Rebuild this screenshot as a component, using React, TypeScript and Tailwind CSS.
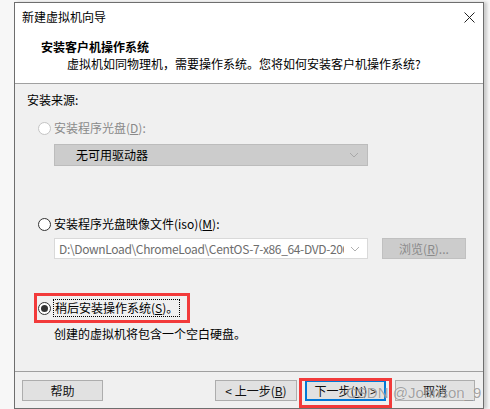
import React from 'react';

const font = "font-['Microsoft_YaHei','Noto_Sans_CJK_SC',sans-serif]";

function Radio({ checked, disabled }: { checked?: boolean; disabled?: boolean }) {
  return (
    <span
      className={`flex h-[13px] w-[13px] shrink-0 items-center justify-center rounded-full border bg-white ${
        disabled ? 'border-[#c4c4c4]' : 'border-[#333333]'
      }`}
    >
      {checked && <span className="h-[7px] w-[7px] rounded-full bg-[#333333]" />}
    </span>
  );
}

function Chevron({ color }: { color: string }) {
  return (
    <svg width="10" height="6" viewBox="0 0 10 6" fill="none">
      <path d="M1 1l4 4 4-4" stroke={color} strokeWidth="1" />
    </svg>
  );
}

function Btn({ children, w, focused }: { children: React.ReactNode; w: string; focused?: boolean }) {
  return (
    <div
      className={`flex h-[21px] items-center justify-center bg-[#e1e1e1] text-[12px] leading-[16px] text-[#111] ${w} ${
        focused ? 'border-2 border-[#0078d7]' : 'border border-[#adadad]'
      }`}
    >
      {children}
    </div>
  );
}

export default function App() {
  return (
    <div className={`relative h-[409px] w-[490px] overflow-hidden bg-[#f7f7f7] ${font}`}>
      {/* the wizard window */}
      <div className="ml-[14px] mt-[2px] flex h-[407px] w-[470px] flex-col border border-[#6e6e6e] bg-[#f0f0f0] shadow-[3px_0_3px_rgba(0,0,0,0.18)]">
        {/* header */}
        <div className="flex h-[81px] flex-col border-b border-[#a0a0a0] bg-white">
          <div className="flex items-center justify-between pl-[7px] pr-[8px] pt-[6px]">
            <span className="text-[12px] leading-[16px] text-black">新建虚拟机向导</span>
            <svg width="11" height="11" viewBox="0 0 11 11">
              <path d="M0.5 0.5l10 10M10.5 0.5l-10 10" stroke="#222" strokeWidth="1" />
            </svg>
          </div>
          <div className="mt-[14px] pl-[26px] text-[12px] font-bold leading-[16px] text-black">安装客户机操作系统</div>
          <div className="mt-[1px] pl-[52px] text-[12px] leading-[16px] text-black">
            虚拟机如同物理机，需要操作系统。您将如何安装客户机操作系统?
          </div>
        </div>

        {/* body */}
        <div className="flex flex-1 flex-col text-[12px] leading-[16px]">
          <div className="ml-[12px] mt-[8px] text-black">安装来源:</div>

          <div className="ml-[23px] mt-[12px] flex items-center gap-[3px] text-[#8a8a8a]">
            <Radio disabled />
            <span>
              安装程序光盘(<span className="underline">D</span>):
            </span>
          </div>
          <div className="ml-[39px] mt-[8px] flex h-[22px] w-[314px] items-center justify-between border border-[#bcbcbc] bg-[#cccccc] pl-[21px] pr-[8px]">
            <span className="text-black">无可用驱动器</span>
            <Chevron color="#a8a8a8" />
          </div>

          <div className="ml-[23px] mt-[50px] flex items-center gap-[3px] text-black">
            <Radio />
            <span>
              安装程序光盘映像文件(iso)(<span className="underline">M</span>):
            </span>
          </div>
          <div className="ml-[39px] mt-[6px] flex items-center gap-[14px]">
            <div className="flex h-[21px] w-[314px] items-center border border-[#d9d9d9] bg-white pl-[4px] pr-[7px]">
              <span className="flex-1 overflow-hidden whitespace-nowrap tracking-[-0.35px] text-[#6d6d6d]">
                D:\DownLoad\ChromeLoad\CentOS-7-x86_64-DVD-2009.iso
              </span>
              <span className="ml-[6px]">
                <Chevron color="#b0b0b0" />
              </span>
            </div>
            <div className="flex h-[21px] w-[84px] items-center justify-center border border-[#c0c0c0] bg-[#cccccc] text-[#8a8a8a]">
              浏览(<span className="underline">R</span>)...
            </div>
          </div>

          <div className="ml-[19px] mt-[34px] flex h-[30px] w-[156px] items-center border-[3px] border-[#f23a3a] pl-[1px]">
            <Radio checked />
            <span className="ml-[2px] border border-dotted border-black px-[1px] leading-[16px] text-black">
              稍后安装操作系统(<span className="underline">S</span>)。
            </span>
          </div>
          <div className="ml-[39px] mt-[3px] text-black">创建的虚拟机将包含一个空白硬盘。</div>
        </div>

        {/* footer */}
        <div className="flex h-[37px] items-start border-t border-[#a0a0a0] pl-[7px] pt-[8px]">
          <Btn w="w-[81px]">帮助</Btn>
          <div className="ml-[112px]">
            <Btn w="w-[82px]">
              &lt; 上一步(<span className="underline">B</span>)
            </Btn>
          </div>
          <div className="relative ml-[8px]">
            <Btn w="w-[81px]" focused>
              下一步(<span className="underline">N</span>) &gt;
            </Btn>
            <div className="absolute -left-[6px] -top-[2px] h-[30px] w-[93px] border-[3px] border-[#f23a3a]" />
          </div>
          <div className="ml-[9px]">
            <Btn w="w-[80px]">取消</Btn>
          </div>
        </div>
      </div>

      {/* watermark */}
      <div className="absolute left-[346px] top-[384px] whitespace-nowrap font-['Liberation_Sans',sans-serif] text-[15px] leading-[18px] text-[rgba(90,90,90,0.55)] [text-shadow:0_0_1px_rgba(255,255,255,0.8)]">
        CSDN @Johnson_9
      </div>
    </div>
  );
}
